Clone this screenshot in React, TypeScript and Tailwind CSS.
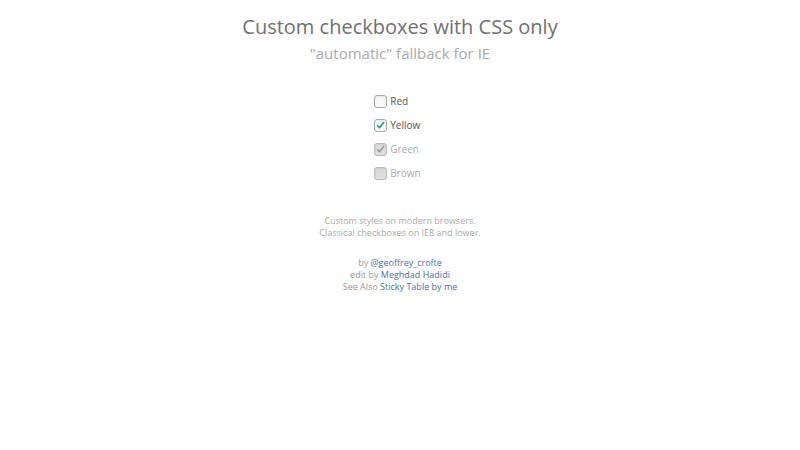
import React from "react";

type Item = { label: string; checked: boolean; disabled: boolean };

const items: Item[] = [
  { label: "Red", checked: false, disabled: false },
  { label: "Yellow", checked: true, disabled: false },
  { label: "Green", checked: true, disabled: true },
  { label: "Brown", checked: false, disabled: true },
];

function Box({ checked, disabled }: { checked: boolean; disabled: boolean }) {
  const cls = disabled
    ? "border-[#bbb] bg-[#ddd]"
    : "border-[#aaa] bg-[#f8f8f8]";
  return (
    <span
      className={`relative inline-block h-[13px] w-[13px] shrink-0 rounded-[3px] border ${cls} shadow-[inset_0_1px_2px_rgba(0,0,0,0.08)]`}
    >
      {checked && (
        <svg viewBox="0 0 12 12" className="absolute left-[0px] top-[0px] h-[11px] w-[11px]">
          <path
            d="M2.8 6.3 L4.9 8.5 L9.4 2.8"
            fill="none"
            stroke={disabled ? "#999" : "#09ad7e"}
            strokeWidth="1.7"
            strokeLinecap="round"
            strokeLinejoin="round"
          />
        </svg>
      )}
    </span>
  );
}

export default function App() {
  return (
    <div
      className="flex min-h-[450px] w-full flex-col items-center bg-white text-[#777]"
      style={{ fontFamily: '"Open Sans", "Noto Sans", sans-serif' }}
    >
      <h1 className="mt-[13px] text-[20px] font-normal leading-[28px] text-[#707070]">
        Custom checkboxes with CSS only
      </h1>
      <h2 className="mt-[2px] text-[15px] font-normal leading-[20px] text-[#aaa]">
        "automatic" fallback for IE
      </h2>

      <div className="mt-[29px] flex flex-col gap-[6px] pr-[5px]">
        {items.map((it) => (
          <label
            key={it.label}
            className={`flex h-[18px] items-center gap-[3px] text-[10px] ${
              it.disabled ? "text-[#aaa]" : "text-[#555]"
            }`}
          >
            <Box checked={it.checked} disabled={it.disabled} />
            <span>{it.label}</span>
          </label>
        ))}
      </div>

      <div className="mt-[33px] text-center text-[9px] leading-[12px] text-[#aaa]">
        <p>Custom styles on modern browsers.</p>
        <p>Classical checkboxes on IE8 and lower.</p>
      </div>

      <div className="mt-[18px] text-center text-[9px] leading-[12px] text-[#999]">
        <p>
          by <a className="text-[#4a6fa8]">@geoffrey_crofte</a>
        </p>
        <p>
          edit by <a className="text-[#4a6fa8]">Meghdad Hadidi</a>
        </p>
        <p>
          See Also <a className="text-[#4a6fa8]">Sticky Table by me</a>
        </p>
      </div>
    </div>
  );
}
